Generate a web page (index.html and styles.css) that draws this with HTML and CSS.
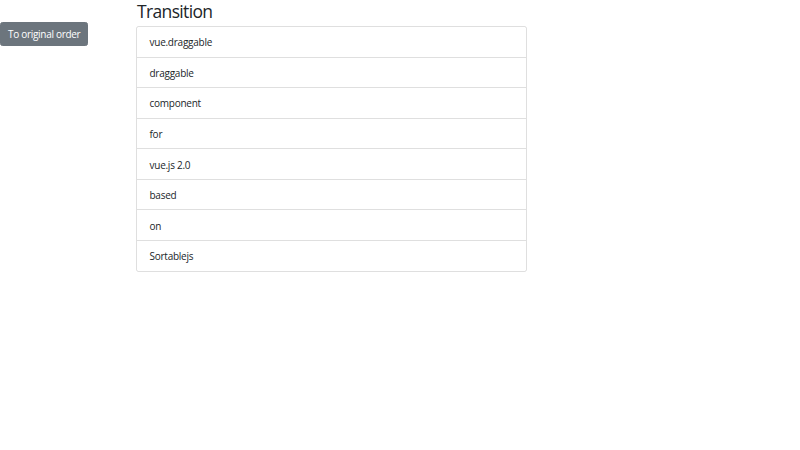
FILE: index.html
```html
<!DOCTYPE html>
<html>
<head>
<meta charset="utf-8">
<link rel="stylesheet" href="styles.css">
</head>
<body>
<div class="row">
  <div class="col-side">
    <button class="btn">To original order</button>
  </div>
  <div class="col-main">
    <h3 class="title">Transition</h3>
    <ul class="list">
      <li class="item">vue.draggable</li>
      <li class="item">draggable</li>
      <li class="item">component</li>
      <li class="item">for</li>
      <li class="item">vue.js 2.0</li>
      <li class="item">based</li>
      <li class="item">on</li>
      <li class="item">Sortablejs</li>
    </ul>
  </div>
</div>
</body>
</html>
```
FILE: styles.css
```css
html, body {
  margin: 0;
  padding: 0;
  background: #fff;
}
body {
  font-family: "Open Sans", "Noto Sans", sans-serif;
  font-size: 10px;
  line-height: 15px;
  color: #212529;
  letter-spacing: -0.25px;
}
.row {
  display: flex;
  align-items: flex-start;
}
.col-side {
  width: 136px;
  flex: none;
  padding-top: 22px;
}
.btn {
  display: inline-block;
  font-family: inherit;
  font-size: 10px;
  line-height: 15px;
  letter-spacing: -0.3px;
  color: #fff;
  background: #6c757d;
  border: 1px solid #6c757d;
  border-radius: 2.5px;
  padding: 4px 7px 3px;
  margin: 0;
  height: 23.5px;
}
.col-main {
  width: 391px;
  flex: none;
}
.title {
  margin: 0 0 5px 1px;
  font-size: 17.5px;
  line-height: 21px;
  font-weight: 400;
  letter-spacing: -0.65px;
  padding-top: 1px;
}
.list {
  list-style: none;
  margin: -1px 0 0;
  padding: 0;
  border: 1px solid rgba(0,0,0,.125);
  border-radius: 2.5px;
}
.item {
  padding: 8.2px 12.5px 6.4px;
  line-height: 15px;
  border-top: 1px solid rgba(0,0,0,.125);
}
.item:first-child {
  border-top: none;
}
```
